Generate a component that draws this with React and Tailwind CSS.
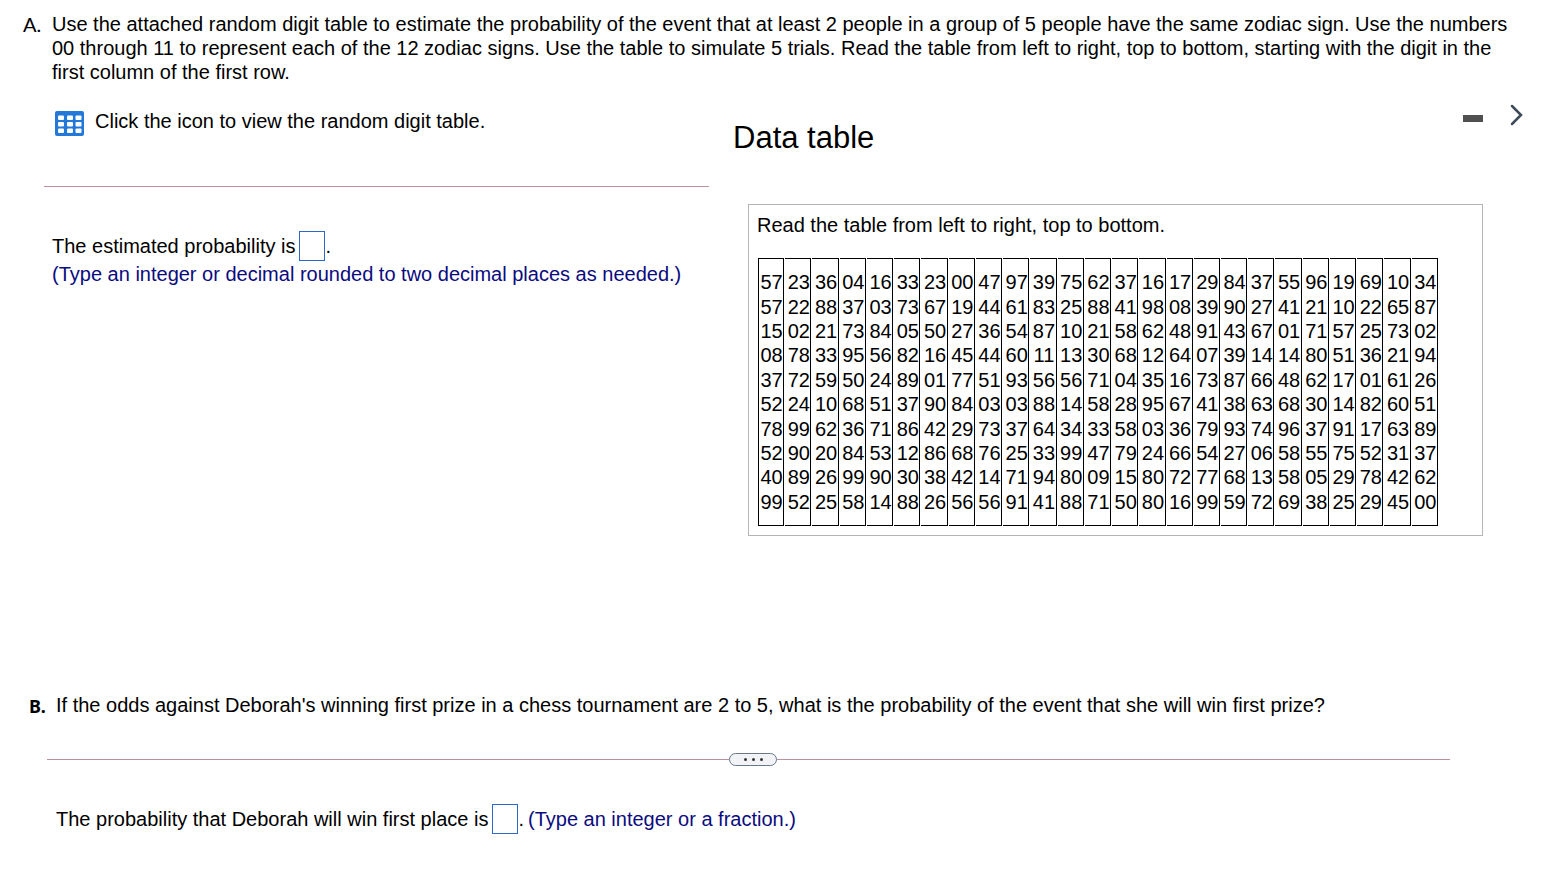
import React, { useState } from "react";

const DIGITS = [
  "57 23 36 04 16 33 23 00 47 97 39 75 62 37 16 17 29 84 37 55 96 19 69 10 34",
  "57 22 88 37 03 73 67 19 44 61 83 25 88 41 98 08 39 90 27 41 21 10 22 65 87",
  "15 02 21 73 84 05 50 27 36 54 87 10 21 58 62 48 91 43 67 01 71 57 25 73 02",
  "08 78 33 95 56 82 16 45 44 60 11 13 30 68 12 64 07 39 14 14 80 51 36 21 94",
  "37 72 59 50 24 89 01 77 51 93 56 56 71 04 35 16 73 87 66 48 62 17 01 61 26",
  "52 24 10 68 51 37 90 84 03 03 88 14 58 28 95 67 41 38 63 68 30 14 82 60 51",
  "78 99 62 36 71 86 42 29 73 37 64 34 33 58 03 36 79 93 74 96 37 91 17 63 89",
  "52 90 20 84 53 12 86 68 76 25 33 99 47 79 24 66 54 27 06 58 55 75 52 31 37",
  "40 89 26 99 90 30 38 42 14 71 94 80 09 15 80 72 77 68 13 58 05 29 78 42 62",
  "99 52 25 58 14 88 26 56 56 91 41 88 71 50 80 16 99 59 72 69 38 25 29 45 00",
].map((row) => row.split(" "));

function TableIcon() {
  return (
    <svg width="30" height="26" viewBox="0 0 30 26">
      <rect x="0" y="0" width="29" height="25" rx="2" fill="#2479d8" />
      {[4.5, 11, 17.5].map((y) =>
        [3, 12, 20.5].map((x) => (
          <rect key={`${x}-${y}`} x={x} y={y} width="6" height="4.4" rx="1" fill="#fff" />
        ))
      )}
    </svg>
  );
}

function AnswerBox({ id, value, onChange }) {
  return (
    <input
      id={id}
      type="text"
      value={value}
      onChange={(e) => onChange(e.target.value)}
      className="h-[30px] w-[26px] border border-[#2f66c9] bg-white text-center outline-none"
    />
  );
}

function DigitTable() {
  return (
    <table className="h-[268px] w-[682px] table-fixed border-separate border-spacing-x-px border-spacing-y-0">
      <tbody>
        {DIGITS.map((row, r) => (
          <tr key={r}>
            {row.map((n, c) => (
              <td
                key={c}
                className={
                  "border-r border-black pl-[2px] text-center leading-6 first:border-l first:pl-px " +
                  (r === 0 ? "border-t pt-[11px]" : "") +
                  (r === DIGITS.length - 1 ? "border-b pb-[11px]" : "")
                }
              >
                {n}
              </td>
            ))}
          </tr>
        ))}
      </tbody>
    </table>
  );
}

export default function App() {
  const [estimate, setEstimate] = useState("");
  const [fraction, setFraction] = useState("");

  return (
    <main className="bg-white font-['Liberation_Sans',Arial,sans-serif] text-[20px] leading-6 text-black">
      {/* Part A */}
      <section>
        <div className="flex pt-3 pr-5 pl-[23px]">
          <span className="w-[29px] shrink-0 font-[Lato,sans-serif]">A.</span>
          <p>
            Use the attached random digit table to estimate the probability of the event that at least 2 people in a
            group of 5 people have the same zodiac sign. Use the numbers
            <br />
            00 through 11 to represent each of the 12 zodiac signs. Use the table to simulate 5 trials. Read the table
            from left to right, top to bottom, starting with the digit in the
            <br />
            first column of the first row.
          </p>
        </div>

        <div className="flex gap-6 pr-[22px] pl-11">
          <div className="w-[665px] pt-[25px]">
            <div className="flex gap-[10px] pl-[11px]">
              <button type="button" aria-label="View random digit table" className="mt-[2px]">
                <TableIcon />
              </button>
              <p>Click the icon to view the random digit table.</p>
            </div>
            <hr className="mt-[49px] border-[#bd8fa3]" />
            <div className="mt-11 pl-2">
              <div className="flex items-center">
                <label htmlFor="estimate" className="mr-1">
                  The estimated probability is
                </label>
                <AnswerBox id="estimate" value={estimate} onChange={setEstimate} />
                <span>.</span>
              </div>
              <p className="mt-px text-[#0b0b80]">
                (Type an integer or decimal rounded to two decimal places as needed.)
              </p>
            </div>
          </div>

          <div className="min-w-0 flex-1 pt-4">
            <div className="flex justify-between">
              <h2 className="pt-[18px] text-[31px] leading-10">Data table</h2>
              <div className="flex items-start gap-[27px]">
                <button type="button" aria-label="Minimize" className="pt-[15px]">
                  <span className="block h-[7px] w-5 bg-[#505050]" />
                </button>
                <button type="button" aria-label="Next" className="pt-1">
                  <svg width="13" height="22" viewBox="0 0 13 22" fill="none" stroke="#3c4a59" strokeWidth="2.5" strokeLinecap="round">
                    <path d="M2 2L11 11L2 20" />
                  </svg>
                </button>
              </div>
            </div>
            <div className="mt-[46px] mr-10 ml-[15px] border border-[#b5b5b5] px-2 pt-2 pb-[9px]">
              <p className="mb-[21px]">Read the table from left to right, top to bottom.</p>
              <DigitTable />
            </div>
          </div>
        </div>
      </section>

      {/* Part B */}
      <section className="pt-[157px]">
        <div className="flex pl-[29px]">
          <span className="w-[27px] shrink-0 pt-px font-['Noto_Sans',sans-serif] text-[18px] font-bold">B.</span>
          <p>
            If the odds against Deborah's winning first prize in a chess tournament are 2 to 5, what is the probability
            of the event that she will win first prize?
          </p>
        </div>

        <div className="mt-[35px] mr-[95px] ml-[47px] flex items-center">
          <hr className="flex-[682] border-[#bd8fa3]" />
          <button
            type="button"
            aria-label="More"
            className="flex h-[13px] w-12 items-center justify-center gap-[5px] rounded-full border border-[#66788a] bg-[#f1f3f6]"
          >
            <span className="size-[3px] rounded-full bg-[#333]" />
            <span className="size-[3px] rounded-full bg-[#333]" />
            <span className="size-[3px] rounded-full bg-[#333]" />
          </button>
          <hr className="flex-[673] border-[#bd8fa3]" />
        </div>

        <div className="mt-[38px] flex items-center pl-14">
          <label htmlFor="fraction" className="mr-1">
            The probability that Deborah will win first place is
          </label>
          <AnswerBox id="fraction" value={fraction} onChange={setFraction} />
          <span className="mr-1">.</span>
          <span className="text-[#0b0b80]">(Type an integer or a fraction.)</span>
        </div>
      </section>
    </main>
  );
}
